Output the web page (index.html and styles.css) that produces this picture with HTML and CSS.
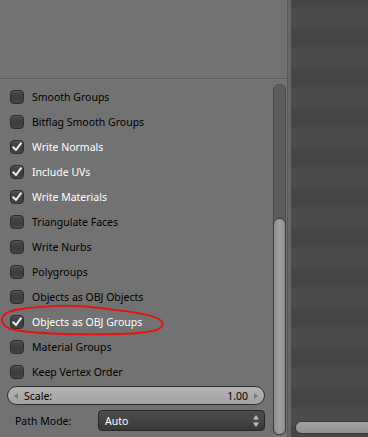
FILE: index.html
```html
<!DOCTYPE html>
<html>
<head>
<meta charset="utf-8">
<link rel="stylesheet" href="styles.css">
</head>
<body>
<div class="app">
  <div class="panel">
    <div class="panel-top"></div>
    <div class="panel-body">
      <div class="content">
        <div class="row"><span class="cb"></span><span class="label">Smooth Groups</span></div>
        <div class="row"><span class="cb"></span><span class="label">Bitflag Smooth Groups</span></div>
        <div class="row on"><span class="cb"><svg viewBox="0 0 14 14"><path d="M3.2 7.2 L6 10 L11 3.2" /></svg></span><span class="label">Write Normals</span></div>
        <div class="row on"><span class="cb"><svg viewBox="0 0 14 14"><path d="M3.2 7.2 L6 10 L11 3.2" /></svg></span><span class="label">Include UVs</span></div>
        <div class="row on"><span class="cb"><svg viewBox="0 0 14 14"><path d="M3.2 7.2 L6 10 L11 3.2" /></svg></span><span class="label">Write Materials</span></div>
        <div class="row"><span class="cb"></span><span class="label">Triangulate Faces</span></div>
        <div class="row"><span class="cb"></span><span class="label">Write Nurbs</span></div>
        <div class="row"><span class="cb"></span><span class="label">Polygroups</span></div>
        <div class="row"><span class="cb"></span><span class="label">Objects as OBJ Objects</span></div>
        <div class="row on circled"><span class="cb"><svg viewBox="0 0 14 14"><path d="M3.2 7.2 L6 10 L11 3.2" /></svg></span><span class="label">Objects as OBJ Groups</span>
          <svg class="scribble" viewBox="0 0 170 34"><path d="M14 5 C 40 1, 70 -1, 100 3 C 130 7, 158 9, 162 17 C 166 25, 150 28, 120 29 C 80 30, 40 29, 14 25 C 2 22, 0 15, 4 10 C 8 6, 14 5, 22 4" /></svg>
        </div>
        <div class="row"><span class="cb"></span><span class="label">Material Groups</span></div>
        <div class="row"><span class="cb"></span><span class="label">Keep Vertex Order</span></div>
        <div class="numfield">
          <span class="arrow-l"></span>
          <span class="nf-label">Scale:</span>
          <span class="nf-value">1.00</span>
          <span class="arrow-r"></span>
        </div>
        <div class="proprow">
          <span class="prop-label">Path Mode:</span>
          <div class="dropdown">
            <span>Auto</span>
            <svg class="updown" viewBox="0 0 8 14"><path d="M4 1 L7 5.5 L1 5.5 Z M4 13 L7 8.5 L1 8.5 Z"/></svg>
          </div>
        </div>
      </div>
      <div class="vscroll"><div class="vthumb"></div></div>
    </div>
  </div>
  <div class="divider"></div>
  <div class="view">
    <div class="hscroll"></div>
  </div>
</div>
</body>
</html>
```
FILE: styles.css
```css
html, body {
  margin: 0;
  padding: 0;
  background: #727272;
}
.app {
  display: flex;
  width: 368px;
  height: 437px;
  overflow: hidden;
  font-family: "Noto Sans", "DejaVu Sans", sans-serif;
  font-size: 10.5px;
}
.panel {
  width: 287px;
  flex: none;
  display: flex;
  flex-direction: column;
  background: #727272;
}
.panel-top {
  height: 78px;
  border-bottom: 1px solid #5e5e5e;
  flex: none;
}
.panel-body {
  flex: 1;
  display: flex;
  border-top: 1px solid #767676;
}
.content {
  width: 273px;
  padding-top: 4px;
  display: flex;
  flex-direction: column;
}
.row {
  height: 25px;
  display: flex;
  align-items: center;
  padding-left: 10px;
  color: #000;
  position: relative;
}
.row.on { color: #fff; }
.cb {
  width: 12px;
  height: 12px;
  border: 1px solid #2c2c2c;
  border-radius: 4px;
  background: linear-gradient(#4a4a4a, #3c3c3c 60%, #464646);
  box-shadow: inset 0 1px 0 #565656;
  flex: none;
  display: flex;
}
.cb svg {
  width: 14px;
  height: 14px;
  margin: -1px;
  overflow: visible;
}
.cb svg path {
  fill: none;
  stroke: #f0f0f0;
  stroke-width: 2;
  stroke-linecap: round;
  stroke-linejoin: round;
}
.label {
  margin-left: 8px;
  line-height: 14px;
}
.scribble {
  position: absolute;
  left: 0;
  top: -4px;
  width: 170px;
  height: 34px;
  overflow: visible;
}
.scribble path {
  fill: none;
  stroke: #e8120c;
  stroke-width: 1.8;
  stroke-linecap: round;
}
.numfield {
  margin: 2px 8px 0 7px;
  height: 17px;
  border: 1px solid #2e2e2e;
  border-radius: 10px;
  background: linear-gradient(#b4b4b4, #a2a2a2);
  display: flex;
  align-items: center;
  color: #000;
  padding: 0 6px 0 6px;
}
.arrow-l {
  width: 0; height: 0;
  border-top: 3px solid transparent;
  border-bottom: 3px solid transparent;
  border-right: 4px solid #7c7c7c;
  margin-right: 6px;
}
.arrow-r {
  width: 0; height: 0;
  border-top: 3px solid transparent;
  border-bottom: 3px solid transparent;
  border-left: 4px solid #7c7c7c;
  margin-left: 6px;
}
.nf-label { flex: 1; }
.proprow {
  display: flex;
  align-items: center;
  margin-top: 5px;
  padding-left: 15px;
  padding-right: 8px;
}
.prop-label {
  width: 83px;
  color: #000;
}
.dropdown {
  flex: 1;
  height: 19px;
  border: 1px solid #262626;
  border-radius: 4px;
  background: linear-gradient(#4e4e4e, #393939);
  color: #fff;
  display: flex;
  align-items: center;
  justify-content: space-between;
  padding: 0 4px 0 6px;
}
.updown {
  width: 8px;
  height: 14px;
}
.updown path { fill: #bdbdbd; }
.vscroll {
  width: 11px;
  margin-top: 4px;
  margin-bottom: 2px;
  background: #5c5c5c;
  border: 1px solid #4c4c4c;
  border-radius: 6px;
  display: flex;
  flex-direction: column;
  justify-content: flex-end;
}
.vthumb {
  height: 215px;
  border: 1px solid #3a3a3a;
  border-radius: 6px;
  margin: 0 -1px -1px -1px;
  background: linear-gradient(90deg, #8e8e8e, #a0a0a0 50%, #8e8e8e);
}
.divider {
  width: 3px;
  flex: none;
  background: #666;
  border-left: 1px solid #585858;
}
.view {
  flex: 1;
  background: repeating-linear-gradient(180deg, #4b4b4b 0px, #4b4b4b 20px, #464646 20px, #464646 40px);
  background-position: 0 7px;
  display: flex;
  flex-direction: column;
  justify-content: flex-end;
  padding: 0 0 3px 4px;
}
.hscroll {
  height: 11px;
  border: 1px solid #3a3a3a;
  border-right: none;
  border-radius: 6px 0 0 6px;
  background: linear-gradient(#a2a2a2, #8e8e8e);
}
```
